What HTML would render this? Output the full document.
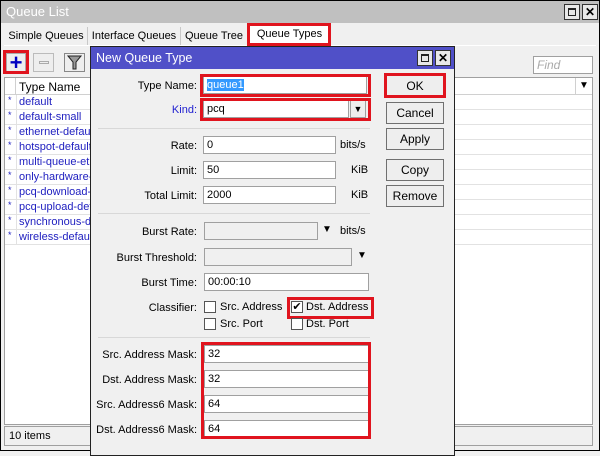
<!DOCTYPE html>
<html><head><style>
*{box-sizing:border-box;margin:0;padding:0}
body{width:600px;height:451px;overflow:hidden;background:#f0f0f0;font-family:"Liberation Sans",sans-serif;font-size:11px;color:#000;position:relative}
.a{position:absolute}
.red{position:absolute;border:3px solid #e0141e}
.inp{position:absolute;background:#fff;border:1px solid #a0a0a0;height:18px;padding:1px 3px;line-height:15px}
.lbl{position:absolute;text-align:right;width:190px;left:7px;line-height:14px}
.btn{position:absolute;left:386px;width:58px;height:22px;border:1px solid #707070;background:#eeeeee;text-align:center;line-height:20px;font-size:12px}
.sep{position:absolute;left:98px;width:272px;height:1px;background:#d8d8d8}
.cb{position:absolute;width:12px;height:12px;background:#fff;border:1px solid #555}
.row{position:absolute;left:5px;width:587px;height:15px;border-bottom:1px solid #e2e2e2}
.row span{color:#2020c0;position:absolute;left:14px;top:1px}
.row i{position:absolute;left:3px;top:0;color:#2020c0;font-style:normal;font-size:9px}
.row b{position:absolute;left:11px;top:0;width:1px;height:15px;background:#e2e2e2}
.tab{position:absolute;top:27px;height:18px;line-height:18px;text-align:center;border-right:1px solid #c8c8c8}
</style></head><body>
<div class="a" style="left:0;top:0;width:600px;height:451px;border:1px solid #000"></div>
<div class="a" style="left:1px;top:1px;width:598px;height:22px;background:#c0c0c0;color:#fff;font-size:13px;line-height:22px;padding-left:5px">Queue List</div>
<div class="a" style="left:564px;top:4px;width:16px;height:16px;border:1px solid #333;background:#e8e8e8"><div class="a" style="left:3px;top:3px;width:8px;height:8px;border:1px solid #222;border-top-width:2px"></div></div>
<div class="a" style="left:582px;top:4px;width:16px;height:16px;border:1px solid #333;background:#e8e8e8;font-size:12px;font-weight:bold;text-align:center;line-height:14px">✕</div>
<div class="a" style="left:4px;top:45px;width:592px;height:1px;background:#fff"></div>
<div class="tab" style="left:5px;width:83px">Simple Queues</div>
<div class="tab" style="left:88px;width:93px">Interface Queues</div>
<div class="tab" style="left:181px;width:67px">Queue Tree</div>
<div class="tab" style="left:250px;top:25px;height:20px;background:#fff;width:80px">Queue Types</div>
<div class="red" style="left:247px;top:23px;width:84px;height:23px"></div>
<div class="a" style="left:6px;top:53px;width:20px;height:19px;border:1px solid #aaa;background:#eee;color:#0000c0;font-size:22px;font-weight:bold;line-height:17px;text-align:center">+</div>
<div class="red" style="left:3px;top:50px;width:26px;height:24px"></div>
<div class="a" style="left:33px;top:53px;width:21px;height:19px;border:1px solid #bbb;background:#eee"><div class="a" style="left:5px;top:7px;width:10px;height:3px;border:1px solid #aaa"></div></div>
<div class="a" style="left:64px;top:53px;width:21px;height:19px;border:1px solid #888;background:#eee"><svg width="19" height="17"><path d="M3 2 H16 L11 8 V15 L8 15 V8 Z" fill="#999" stroke="#222"/></svg></div>
<div class="inp" style="left:533px;top:56px;width:60px;height:18px;color:#aaa;font-style:italic;font-size:12px">Find</div>
<div class="a" style="left:4px;top:77px;width:589px;height:348px;background:#fff;border:1px solid #a0a0a0"></div>
<div class="a" style="left:5px;top:78px;width:587px;height:17px;background:#fff;border-bottom:1px solid #d0d0d0"><div class="a" style="left:10px;top:0;width:1px;height:17px;background:#d0d0d0"></div><span class="a" style="left:14px;top:2px;font-size:12px">Type Name</span><div class="a" style="left:570px;top:0;width:1px;height:17px;background:#d0d0d0"></div><span class="a" style="left:574px;top:2px;font-size:10px">▼</span></div>
<div class="row" style="top:95px"><i>*</i><b></b><span>default</span></div>
<div class="row" style="top:110px"><i>*</i><b></b><span>default-small</span></div>
<div class="row" style="top:125px"><i>*</i><b></b><span>ethernet-default</span></div>
<div class="row" style="top:140px"><i>*</i><b></b><span>hotspot-default</span></div>
<div class="row" style="top:155px"><i>*</i><b></b><span>multi-queue-ethernet</span></div>
<div class="row" style="top:170px"><i>*</i><b></b><span>only-hardware-queue</span></div>
<div class="row" style="top:185px"><i>*</i><b></b><span>pcq-download-default</span></div>
<div class="row" style="top:200px"><i>*</i><b></b><span>pcq-upload-default</span></div>
<div class="row" style="top:215px"><i>*</i><b></b><span>synchronous-default</span></div>
<div class="row" style="top:230px"><i>*</i><b></b><span>wireless-default</span></div>
<div class="a" style="left:4px;top:426px;width:589px;height:20px;border:1px solid #a0a0a0;background:#f0f0f0;padding:3px 4px">10 items</div>

<!-- dialog -->
<div class="a" style="left:90px;top:46px;width:365px;height:410px;background:#f0f0f0;border:1px solid #222"></div>
<div class="a" style="left:91px;top:47px;width:363px;height:22px;background:#5050c8;color:#fff;font-size:12.5px;line-height:22px;padding-left:5px">New Queue Type</div>
<div class="a" style="left:417px;top:50px;width:16px;height:16px;border:1px solid #333;background:#e8e8e8"><div class="a" style="left:3px;top:3px;width:8px;height:8px;border:1px solid #222;border-top-width:2px"></div></div>
<div class="a" style="left:435px;top:50px;width:16px;height:16px;border:1px solid #333;background:#e8e8e8;font-size:12px;font-weight:bold;text-align:center;line-height:14px">✕</div>

<div class="lbl" style="top:79px">Type Name:</div>
<div class="inp" style="left:203px;top:76px;width:164px"><span style="background:#3399ff;color:#fff">queue1</span></div>
<div class="red" style="left:200px;top:74px;width:171px;height:23px"></div>
<div class="lbl" style="top:103px;color:#2020d0">Kind:</div>
<div class="inp" style="left:203px;top:100px;width:146px">pcq</div>
<div class="a" style="left:350px;top:100px;width:16px;height:18px;border:1px solid #a0a0a0;background:#eee;text-align:center;font-size:9px;line-height:16px">▼</div>
<div class="red" style="left:200px;top:98px;width:171px;height:23px"></div>
<div class="sep" style="top:128px"></div>

<div class="lbl" style="top:139px">Rate:</div>
<div class="inp" style="left:203px;top:136px;width:133px">0</div>
<div class="a" style="left:340px;top:139px">bits/s</div>
<div class="lbl" style="top:164px">Limit:</div>
<div class="inp" style="left:203px;top:161px;width:133px">50</div>
<div class="a" style="left:351px;top:164px">KiB</div>
<div class="lbl" style="top:189px">Total Limit:</div>
<div class="inp" style="left:203px;top:186px;width:133px">2000</div>
<div class="a" style="left:351px;top:189px">KiB</div>
<div class="sep" style="top:213px"></div>

<div class="lbl" style="top:225px">Burst Rate:</div>
<div class="inp" style="left:204px;top:222px;width:114px;background:#f0f0f0"></div>
<div class="a" style="left:322px;top:224px;font-size:10px">▼</div>
<div class="a" style="left:340px;top:225px">bits/s</div>
<div class="lbl" style="top:251px">Burst Threshold:</div>
<div class="inp" style="left:204px;top:248px;width:148px;background:#f0f0f0"></div>
<div class="a" style="left:357px;top:250px;font-size:10px">▼</div>
<div class="lbl" style="top:276px">Burst Time:</div>
<div class="inp" style="left:204px;top:273px;width:165px">00:00:10</div>

<div class="lbl" style="top:301px">Classifier:</div>
<div class="cb" style="left:204px;top:301px"></div><div class="a" style="left:220px;top:301px">Src. Address</div>
<div class="cb" style="left:291px;top:301px;font-size:11px;line-height:10px;text-align:center">✔</div><div class="a" style="left:306px;top:301px">Dst. Address</div>
<div class="red" style="left:287px;top:297px;width:87px;height:22px"></div>
<div class="cb" style="left:204px;top:318px"></div><div class="a" style="left:220px;top:318px">Src. Port</div>
<div class="cb" style="left:291px;top:318px"></div><div class="a" style="left:306px;top:318px">Dst. Port</div>
<div class="sep" style="top:337px"></div>

<div class="lbl" style="top:348px">Src. Address Mask:</div>
<div class="inp" style="left:204px;top:345px;width:165px">32</div>
<div class="lbl" style="top:373px">Dst. Address Mask:</div>
<div class="inp" style="left:204px;top:370px;width:165px">32</div>
<div class="lbl" style="top:398px">Src. Address6 Mask:</div>
<div class="inp" style="left:204px;top:395px;width:165px">64</div>
<div class="lbl" style="top:423px">Dst. Address6 Mask:</div>
<div class="inp" style="left:204px;top:420px;width:165px">64</div>
<div class="red" style="left:201px;top:342px;width:170px;height:97px"></div>

<div class="btn" style="top:75px">OK</div>
<div class="red" style="left:384px;top:73px;width:62px;height:25px"></div>
<div class="btn" style="top:102px">Cancel</div>
<div class="btn" style="top:128px">Apply</div>
<div class="btn" style="top:159px">Copy</div>
<div class="btn" style="top:185px">Remove</div>
</body></html>
